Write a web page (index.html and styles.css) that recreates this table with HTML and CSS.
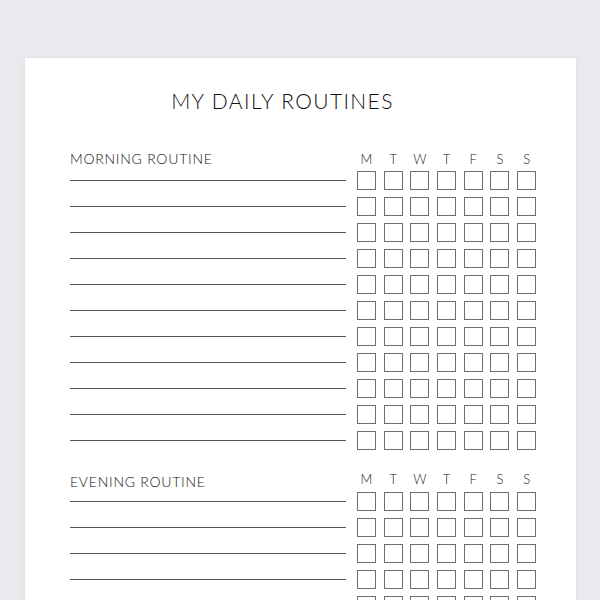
FILE: index.html
```html
<!DOCTYPE html>
<html>
<head>
<meta charset="utf-8">
<link rel="stylesheet" href="styles.css">
</head>
<body>
<div class="paper">
  <h1 class="title">MY DAILY ROUTINES</h1>

  <section class="routine">
    <div class="head">
      <div class="label">MORNING ROUTINE</div>
      <div class="days"><span>M</span><span>T</span><span>W</span><span>T</span><span>F</span><span>S</span><span>S</span></div>
    </div>
    <div class="row"><div class="line"></div><div class="boxes"><i></i><i></i><i></i><i></i><i></i><i></i><i></i></div></div>
    <div class="row"><div class="line"></div><div class="boxes"><i></i><i></i><i></i><i></i><i></i><i></i><i></i></div></div>
    <div class="row"><div class="line"></div><div class="boxes"><i></i><i></i><i></i><i></i><i></i><i></i><i></i></div></div>
    <div class="row"><div class="line"></div><div class="boxes"><i></i><i></i><i></i><i></i><i></i><i></i><i></i></div></div>
    <div class="row"><div class="line"></div><div class="boxes"><i></i><i></i><i></i><i></i><i></i><i></i><i></i></div></div>
    <div class="row"><div class="line"></div><div class="boxes"><i></i><i></i><i></i><i></i><i></i><i></i><i></i></div></div>
    <div class="row"><div class="line"></div><div class="boxes"><i></i><i></i><i></i><i></i><i></i><i></i><i></i></div></div>
    <div class="row"><div class="line"></div><div class="boxes"><i></i><i></i><i></i><i></i><i></i><i></i><i></i></div></div>
    <div class="row"><div class="line"></div><div class="boxes"><i></i><i></i><i></i><i></i><i></i><i></i><i></i></div></div>
    <div class="row"><div class="line"></div><div class="boxes"><i></i><i></i><i></i><i></i><i></i><i></i><i></i></div></div>
    <div class="row"><div class="line"></div><div class="boxes"><i></i><i></i><i></i><i></i><i></i><i></i><i></i></div></div>
  </section>

  <section class="routine evening">
    <div class="head">
      <div class="label">EVENING ROUTINE</div>
      <div class="days"><span>M</span><span>T</span><span>W</span><span>T</span><span>F</span><span>S</span><span>S</span></div>
    </div>
    <div class="row"><div class="line"></div><div class="boxes"><i></i><i></i><i></i><i></i><i></i><i></i><i></i></div></div>
    <div class="row"><div class="line"></div><div class="boxes"><i></i><i></i><i></i><i></i><i></i><i></i><i></i></div></div>
    <div class="row"><div class="line"></div><div class="boxes"><i></i><i></i><i></i><i></i><i></i><i></i><i></i></div></div>
    <div class="row"><div class="line"></div><div class="boxes"><i></i><i></i><i></i><i></i><i></i><i></i><i></i></div></div>
    <div class="row"><div class="line"></div><div class="boxes"><i></i><i></i><i></i><i></i><i></i><i></i><i></i></div></div>
    <div class="row"><div class="line"></div><div class="boxes"><i></i><i></i><i></i><i></i><i></i><i></i><i></i></div></div>
  </section>
</div>
</body>
</html>
```
FILE: styles.css
```css
html, body {
  margin: 0;
  padding: 0;
  height: 600px;
  overflow: hidden;
  background: #e9eaee;
}

body {
  font-family: "Lato", "Open Sans", sans-serif;
  color: #222;
}

.paper {
  margin: 58px 0 0 25px;
  width: 551px;
  height: 700px;
  background: #ffffff;
  box-shadow: 0 0 5px rgba(0, 0, 0, 0.06);
  padding: 31.5px 0 0 45px;
  box-sizing: border-box;
}

.title {
  margin: 0 0 41px 100px;
  font-weight: 300;
  font-size: 21px;
  line-height: 21px;
  letter-spacing: 1.4px;
  color: #111;
  width: 225px;
  text-align: center;
  white-space: nowrap;
}

.routine {
  display: flex;
  flex-direction: column;
}

.evening {
  margin-top: 19.4px;
}

.head {
  display: flex;
  height: 14px;
  padding-bottom: 1.6px;
  line-height: 14px;
}

.label {
  width: 287px;
  font-size: 14px;
  font-weight: 300;
  letter-spacing: 0.75px;
  color: #111;
}

.evening .label {
  position: relative;
  top: 3px;
}

.days {
  display: flex;
  gap: 7.7px;
  font-size: 13px;
  font-weight: 300;
  color: #222;
}

.days span {
  width: 19px;
  text-align: center;
}

.row {
  display: flex;
  align-items: center;
  height: 26px;
}

.line {
  width: 276px;
  height: 1px;
  background: #555;
  margin-right: 11px;
}

.boxes {
  display: flex;
  gap: 7.7px;
}

.boxes i {
  display: block;
  width: 19px;
  height: 19px;
  box-sizing: border-box;
  border: 1.4px solid #6e6e6e;
}
```
